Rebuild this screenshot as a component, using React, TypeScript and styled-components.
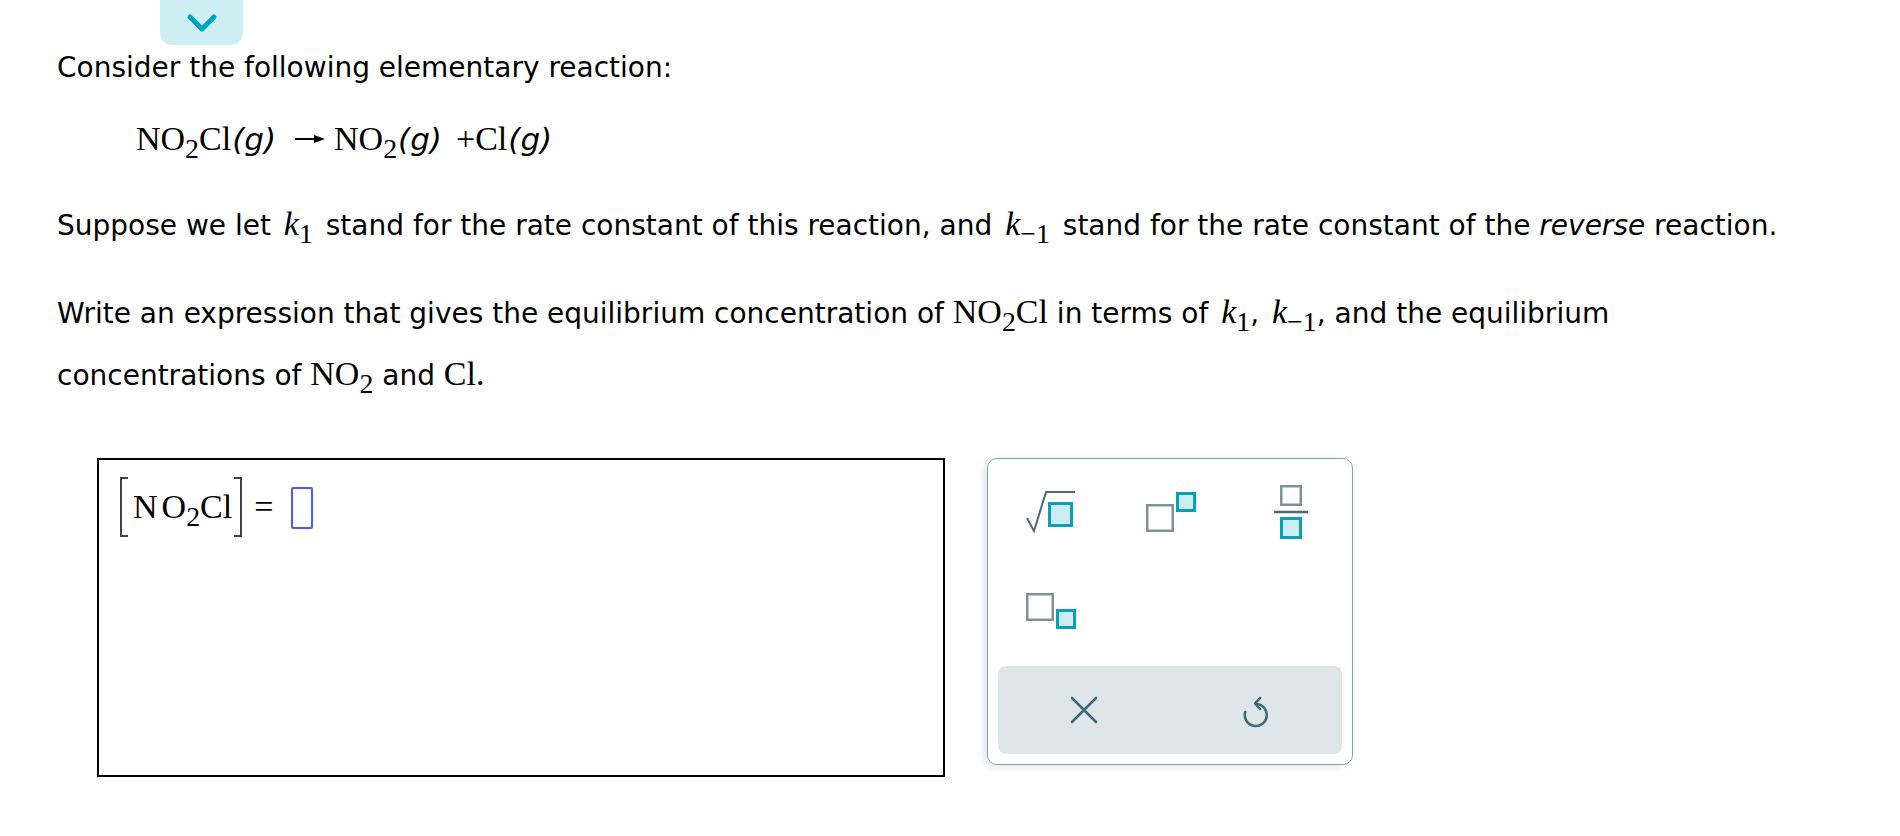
import React from 'react'
import styled, { createGlobalStyle } from 'styled-components'

const Global = createGlobalStyle`
    body {
        margin: 0;
        background: #fff;
        color: #000;
        font-family: "DejaVu Sans", Verdana, sans-serif;
    }
`;
const Page = styled.div`
    padding-left: 57px;
    font-size: 28px;
`;
const Tab = styled.div`
    margin-left: 103px;
    width: 83px;
    height: 45px;
    background: #cdeff4;
    border-radius: 0 0 12px 12px;
    display: flex;
    align-items: center;
    justify-content: center;
`;
const Para = styled.p<{ $lh: number; $mt: number }>`
    margin: ${p => p.$mt}px 0 0 0;
    line-height: ${p => p.$lh}px;
    white-space: nowrap;
`;
const Equation = styled(Para)`
    padding-left: 79px;
    display: flex;
    align-items: center;
`;
const Chem = styled.span`
    font-family: "Liberation Serif", "Times New Roman", serif;
    font-size: 34px;
`;
const Var = styled(Chem)<{ $end?: boolean }>`
    font-style: italic;
    margin: 0 ${p => (p.$end ? 0 : 4)}px 0 4px;
`;
const Sub = styled.span`
    font-size: 0.82em;
    font-style: normal;
    position: relative;
    top: 0.3em;
    line-height: 0;
`;
const Phase = styled.i`
    font-style: italic;
    font-size: 31px;
    margin-left: 1px;
`;
const Arrow = styled.svg`
    margin: 0 9px 0 19px;
`;
const Plus = styled(Chem)`
    margin-left: 14px;
`;
const AnswerRow = styled.div`
    display: flex;
    align-items: flex-start;
    gap: 42px;
    margin: 52px 0 0 40px;
`;
const AnswerBox = styled.div`
    width: 848px;
    height: 319px;
    box-sizing: border-box;
    border: 2px solid #000;
    padding: 17px 0 0 21px;
`;
const Expr = styled.div`
    display: flex;
    align-items: center;
    height: 60px;
    font-family: "Liberation Serif", "Times New Roman", serif;
    font-size: 34px;
`;
const Bracket = styled.span<{ $side: 'left' | 'right' }>`
    width: 6px;
    height: 56px;
    border: 2px solid #444;
    border-${p => (p.$side === 'left' ? 'right' : 'left')}: none;
`;
const Formula = styled.span`
    margin: 0 2px 0 5px;
`;
const Spread = styled.span`
    margin-right: 4px;
`;
const Equals = styled.span`
    margin: 0 18px 0 12px;
`;
const Slot = styled.span`
    width: 18px;
    height: 38px;
    border: 2px solid #4a5cf5;
    border-radius: 2px;
    margin-top: 2px;
`;
const Panel = styled.div`
    width: 366px;
    height: 307px;
    box-sizing: border-box;
    border: 1.5px solid #86a2aa;
    border-radius: 10px;
    box-shadow: -3px 2px 6px rgba(80, 110, 120, 0.18);
    padding: 3px 10px 10px 10px;
    display: flex;
    flex-direction: column;
`;
const Keys = styled.div`
    display: grid;
    grid-template-columns: repeat(3, 120px);
    grid-auto-rows: 99px;
    margin-left: -7px;
`;
const Key = styled.div`
    display: flex;
    align-items: center;
    justify-content: center;
`;
const Actions = styled.div`
    margin-top: auto;
    height: 88px;
    background: #dfe6e9;
    border-radius: 8px;
    display: grid;
    grid-template-columns: 1fr 1fr;
`;
const Action = styled.div`
    display: flex;
    align-items: center;
    justify-content: center;
`;

const GRAY = '#7a949c'
const TEAL = '#0aa0b8'
const FILL = '#ccedf1'
const DARK = '#4b6b75'

const SqrtIcon = () => (
    <svg width="50" height="44" viewBox="0 0 50 44">
        <path d="M1 28 L8 41 L20 2 H49" fill="none" stroke={DARK} strokeWidth="2" />
        <rect x="23.5" y="13.5" width="22" height="22" fill={FILL} stroke={TEAL} strokeWidth="3" />
    </svg>
)
const SupIcon = () => (
    <svg width="54" height="44" viewBox="0 0 54 44">
        <rect x="3.25" y="15.25" width="25.5" height="25.5" fill="#fff" stroke={GRAY} strokeWidth="2.5" />
        <rect x="33.5" y="3.5" width="17" height="17" fill={FILL} stroke={TEAL} strokeWidth="3" />
    </svg>
)
const FracIcon = () => (
    <svg width="38" height="58" viewBox="0 0 38 58">
        <rect x="9.25" y="3.25" width="19.5" height="18.5" fill="#fff" stroke={GRAY} strokeWidth="2.5" />
        <path d="M2 29 H36" stroke={DARK} strokeWidth="2.5" />
        <rect x="9.5" y="35.5" width="19" height="19" fill={FILL} stroke={TEAL} strokeWidth="3" />
    </svg>
)
const SubIcon = () => (
    <svg width="54" height="40" viewBox="0 0 54 40">
        <rect x="3.25" y="3.25" width="25.5" height="25.5" fill="#fff" stroke={GRAY} strokeWidth="2.5" />
        <rect x="33.5" y="19.5" width="17" height="17" fill={FILL} stroke={TEAL} strokeWidth="3" />
    </svg>
)
const ClearIcon = () => (
    <svg width="28" height="28" viewBox="0 0 28 28">
        <path d="M2 2 L26 26 M26 2 L2 26" stroke="#3f6a78" strokeWidth="2.6" strokeLinecap="round" />
    </svg>
)
const UndoIcon = () => (
    <svg width="30" height="36" viewBox="0 0 30 36">
        <path d="M15 12 A11 11 0 1 1 4.2 20" fill="none" stroke="#3f6a78" strokeWidth="2.6" strokeLinecap="round" />
        <path d="M19 6 L14 11.5 L19 17" fill="none" stroke="#3f6a78" strokeWidth="2.6" strokeLinecap="round" strokeLinejoin="round" />
    </svg>
)

const NO2 = () => (
    <Chem>NO<Sub>2</Sub></Chem>
)
const K = ({ sub, end }: { sub: string; end?: boolean }) => (
    <Var $end={end}>k<Sub>{sub}</Sub></Var>
)

const App = () => {
    return (
        <Page>
            <Global />
            <Tab>
                <svg width="32" height="20" viewBox="0 0 32 20">
                    <path d="M4 4 L16 16 L28 4" fill="none" stroke="#00a4c0" strokeWidth="5" strokeLinecap="round" strokeLinejoin="round" />
                </svg>
            </Tab>
            <Para $lh={36} $mt={5}>Consider the following elementary reaction:</Para>
            <Equation $lh={40} $mt={33}>
                <Chem>NO<Sub>2</Sub>Cl</Chem><Phase>(g)</Phase>
                <Arrow width="30" height="10" viewBox="0 0 30 10">
                    <path d="M0 5 H20" stroke="#000" strokeWidth="2" />
                    <path d="M19 1 L30 5 L19 9 Z" fill="#000" />
                </Arrow>
                <NO2 /><Phase>(g)</Phase><Plus>+Cl</Plus><Phase>(g)</Phase>
            </Equation>
            <Para $lh={40} $mt={45}>
                Suppose we let <K sub="1" /> stand for the rate constant of this reaction, and <K sub="−1" /> stand for the rate constant of the <i>reverse</i> reaction.
            </Para>
            <Para $lh={60} $mt={36}>
                Write an expression that gives the equilibrium concentration of <Chem>NO<Sub>2</Sub>Cl</Chem> in terms of <K sub="1" end />, <K sub="−1" end />, and the equilibrium
                <br />
                concentrations of <NO2 /> and <Chem>Cl.</Chem>
            </Para>
            <AnswerRow>
                <AnswerBox>
                    <Expr>
                        <Bracket $side="left" />
                        <Formula><Spread>N</Spread>O<Sub>2</Sub>Cl</Formula>
                        <Bracket $side="right" />
                        <Equals>=</Equals>
                        <Slot />
                    </Expr>
                </AnswerBox>
                <Panel>
                    <Keys>
                        <Key><SqrtIcon /></Key>
                        <Key><SupIcon /></Key>
                        <Key><FracIcon /></Key>
                        <Key><SubIcon /></Key>
                    </Keys>
                    <Actions>
                        <Action><ClearIcon /></Action>
                        <Action><UndoIcon /></Action>
                    </Actions>
                </Panel>
            </AnswerRow>
        </Page>
    )
}

export default App
